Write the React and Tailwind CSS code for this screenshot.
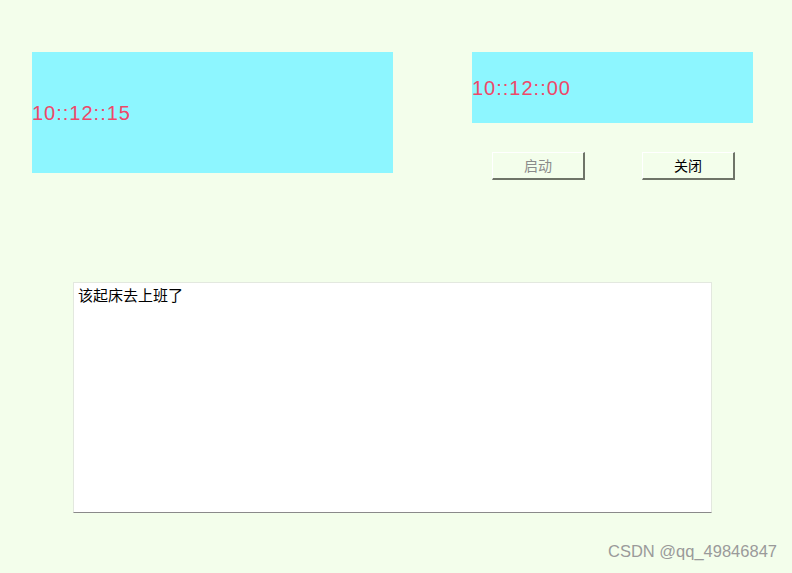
export default function App() {
  const sans = { fontFamily: '"Liberation Sans", Arial, sans-serif' };
  const cjk = { fontFamily: '"Noto Sans CJK SC", "Liberation Sans", sans-serif' };

  return (
    <div className="relative h-[573px] w-[792px] overflow-hidden bg-[#f3feeb]">
      <div className="flex items-start pl-[32px] pt-[52px]">
        <div className="flex h-[121px] w-[361px] items-center bg-[#8df6ff]">
          <span className="text-[20px] leading-none tracking-[1px] text-[#ef4869]" style={sans}>
            10::12::15
          </span>
        </div>

        <div className="ml-[79px] flex flex-col">
          <div className="flex h-[71px] w-[281px] items-center bg-[#8df6ff]">
            <span className="text-[20px] leading-none tracking-[1px] text-[#ef4869]" style={sans}>
              10::12::00
            </span>
          </div>
          <div className="mt-[29px] flex gap-[57px] pl-[20px]">
            <button
              className="flex h-[28px] w-[93px] items-center justify-center border-t border-l border-b-2 border-r-2 border-t-white border-l-white border-b-[#6e7468] border-r-[#6e7468] text-[14px] text-[#8a8a8a]"
              style={cjk}
            >
              启动
            </button>
            <button
              className="flex h-[28px] w-[93px] items-center justify-center border-t border-l border-b-2 border-r-2 border-t-white border-l-white border-b-[#6e7468] border-r-[#6e7468] text-[14px] text-black"
              style={cjk}
            >
              关闭
            </button>
          </div>
        </div>
      </div>

      <div
        className="ml-[73px] mt-[102px] h-[231px] w-[639px] border border-[#e3e8df] border-b-[#8a8a8a] bg-white px-[4px] pt-[2px] text-[15px] leading-[20px] text-black"
        style={cjk}
      >
        该起床去上班了
      </div>

      <div
        className="absolute bottom-[9px] right-[15px] text-[16.5px] text-[#9a9a9a]"
        style={sans}
      >
        CSDN @qq_49846847
      </div>
    </div>
  );
}
